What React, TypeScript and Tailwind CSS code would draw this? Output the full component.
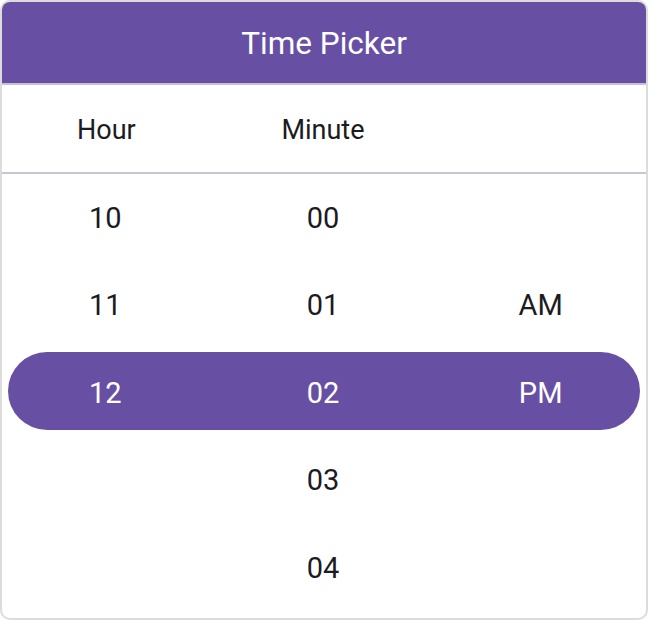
const hours = ["10", "11", "12", "", ""];
const minutes = ["00", "01", "02", "03", "04"];
const periods = ["", "AM", "PM", "", ""];
const selected = 2;

const App = () => {
  return (
    <div className="w-[648px] h-[620px] bg-white p-0 font-['Roboto',sans-serif]">
      <div className="flex h-full flex-col overflow-hidden rounded-[10px] border-2 border-[#dcdcdc] bg-white">
        <div className="flex h-[83px] items-center justify-center border-b-2 border-[#c8bfd9] bg-[#6750a4] pt-[3px] text-[31.5px] text-white">
          Time Picker
        </div>
        <div className="grid h-[89px] grid-cols-3 items-center border-b-2 border-[#cac4d0] pt-[3px] text-[27px] text-[#1c1b1f]">
          <span className="pr-[6px] text-center">Hour</span>
          <span className="pr-[2px] text-center">Minute</span>
          <span />
        </div>
        <div className="flex flex-1 flex-col">
          {minutes.map((m, i) => (
            <div key={m} className="relative grid h-[87.5px] grid-cols-3 items-center pt-[1px] text-[29px]">
              {i === selected && (
                <div className="absolute inset-x-[6px] top-[2.5px] bottom-[6.5px] rounded-full bg-[#6750a4]" />
              )}
              <span className={`relative pr-[8px] text-center ${i === selected ? "text-white" : "text-[#1c1b1f]"}`}>
                {hours[i]}
              </span>
              <span className={`relative pr-[2px] text-center ${i === selected ? "text-white" : "text-[#1c1b1f]"}`}>{m}</span>
              <span className={`relative pl-[4px] text-center ${i === selected ? "text-white" : "text-[#1c1b1f]"}`}>
                {periods[i]}
              </span>
            </div>
          ))}
        </div>
      </div>
    </div>
  );
};

export default App;
